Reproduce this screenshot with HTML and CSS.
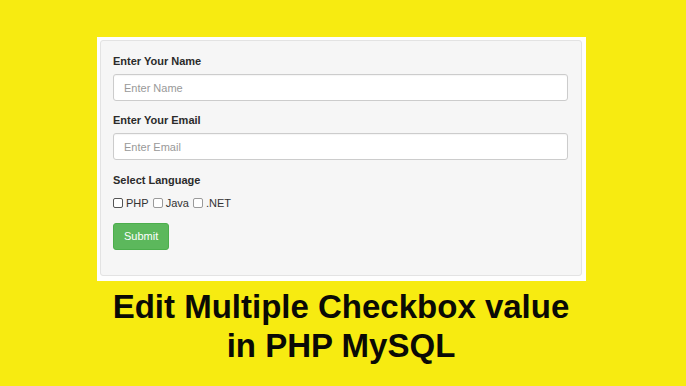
FILE: index.html
```html
<!DOCTYPE html>
<html>
<head>
<meta charset="utf-8">
<link rel="stylesheet" href="styles.css">
</head>
<body>
<div class="page">
  <div class="panel">
    <form class="well">
      <div class="group">
        <label class="label">Enter Your Name</label>
        <input class="input" type="text" placeholder="Enter Name">
      </div>
      <div class="group">
        <label class="label">Enter Your Email</label>
        <input class="input" type="text" placeholder="Enter Email">
      </div>
      <div class="group group-last">
        <label class="label">Select Language</label>
        <div class="checks">
          <input class="check check-dark" type="checkbox"><span class="check-text">PHP</span>
          <input class="check" type="checkbox"><span class="check-text">Java</span>
          <input class="check" type="checkbox"><span class="check-text">.NET</span>
        </div>
      </div>
      <button class="btn" type="button">Submit</button>
    </form>
  </div>
  <h1 class="title">Edit Multiple Checkbox value<br>in PHP MySQL</h1>
</div>
</body>
</html>
```

FILE: styles.css
```css
html, body {
  margin: 0;
  padding: 0;
  background: #f7eb11;
}
body {
  width: 686px;
  height: 386px;
  overflow: hidden;
  font-family: "Liberation Sans", Arial, sans-serif;
}
.page {
  display: flex;
  flex-direction: column;
}
.panel {
  margin: 37px 0 0 97px;
  width: 489px;
  box-sizing: border-box;
  padding: 3px 4px 5px 3px;
  background: #fefefe;
}
.well {
  margin: 0;
  background: #f6f6f6;
  border: 1px solid #e3e3e3;
  border-radius: 3px;
  padding: 13px 13px 25px 12px;
  display: flex;
  flex-direction: column;
  align-items: flex-start;
}
.group {
  display: flex;
  flex-direction: column;
  align-self: stretch;
  margin-bottom: 12px;
}
.group + .group-last {
  margin-top: 1px;
}
.label {
  font-size: 11px;
  line-height: 15px;
  font-weight: bold;
  color: #2b2b2b;
  margin-bottom: 5px;
}
.input {
  height: 27px;
  box-sizing: border-box;
  border: 1px solid #ccc;
  border-radius: 3px;
  background: #fff;
  padding: 0 10px;
  margin: 0;
  font-family: inherit;
  font-size: 11px;
  color: #555;
  box-shadow: inset 0 1px 1px rgba(0,0,0,0.04);
}
.input::placeholder {
  color: #999;
}
.checks {
  padding-top: 3px;
  font-size: 11px;
  line-height: 15px;
  color: #333;
}
.check {
  -webkit-appearance: none;
  appearance: none;
  width: 10px;
  height: 10px;
  margin: 0 3px 0 0;
  border: 1px solid #9a9a9a;
  border-radius: 2px;
  background: #fff;
  vertical-align: -1px;
  box-sizing: border-box;
}
.check-dark {
  border-color: #555;
}
.check-text {
  margin-right: 1px;
}
.btn {
  margin: 0;
  height: 27px;
  padding: 0 10px;
  border: 1px solid #4cae4c;
  border-radius: 3px;
  background: #5cb85c;
  color: #fff;
  font-family: inherit;
  font-size: 11px;
  line-height: 25px;
}
.title {
  margin: 6px 0 0 0;
  text-align: center;
  font-size: 33px;
  line-height: 39px;
  font-weight: bold;
  color: #0a0a05;
  padding-right: 4px;
}
```
